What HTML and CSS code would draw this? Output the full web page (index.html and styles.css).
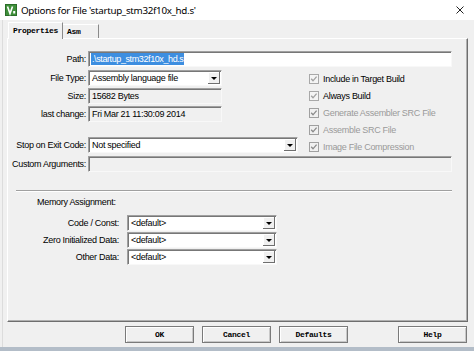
FILE: index.html
```html
<!DOCTYPE html>
<html>
<head>
<meta charset="utf-8">
<title>Options for File</title>
<link rel="stylesheet" href="styles.css">
</head>
<body>
<div class="window">
  <div class="titlebar">
    <svg class="appicon" viewBox="0 0 12 12" width="12" height="12">
      <rect x="0" y="0" width="12" height="12" fill="#3f8f3a"/>
      <rect x="0.5" y="0.5" width="11" height="11" fill="none" stroke="#2b6e29"/>
      <polyline points="2.5,2.5 5,9.5 7.5,2.5" fill="none" stroke="#fff" stroke-width="1.6"/>
      <rect x="8.2" y="7" width="2" height="2.5" fill="#fff"/>
    </svg>
    <span class="title">Options for File 'startup_stm32f10x_hd.s'</span>
    <svg class="close" viewBox="0 0 8 8" width="8" height="8">
      <path d="M0.5 0.5 L7.5 7.5 M7.5 0.5 L0.5 7.5" stroke="#222" stroke-width="1" fill="none"/>
    </svg>
  </div>

  <div class="client">
    <div class="tabs">
      <div class="tab active">Properties</div>
      <div class="tab asm">Asm</div>
    </div>

    <div class="panel">
      <div class="row path-row">
        <span class="lbl">Path:</span>
        <div class="edit w364"><span class="sel">.\startup_stm32f10x_hd.s</span></div>
      </div>

      <div class="upper">
        <div class="leftcol">
          <div class="row">
            <span class="lbl">File Type:</span>
            <div class="combo w134"><span class="val">Assembly language file</span><span class="drop"></span></div>
          </div>
          <div class="row mt2">
            <span class="lbl">Size:</span>
            <div class="ro w134"><span class="val">15682 Bytes</span></div>
          </div>
          <div class="row mt2">
            <span class="lbl">last change:</span>
            <div class="ro w134"><span class="val">Fri Mar 21 11:30:09 2014</span></div>
          </div>
          <div class="row mt15">
            <span class="lbl">Stop on Exit Code:</span>
            <div class="combo w210"><span class="val">Not specified</span><span class="drop"></span></div>
          </div>
        </div>

        <div class="checks">
          <div class="cb"><svg class="box" viewBox="0 0 10 10" width="10" height="10"><rect x="0.5" y="0.5" width="9" height="9" fill="#f4f4f4" stroke="#a8a8a8"/><path d="M2.2 4.8 L4 6.8 L7.6 2.6" stroke="#a0a0a0" stroke-width="1.3" fill="none"/></svg><span>Include in Target Build</span></div>
          <div class="cb"><svg class="box" viewBox="0 0 10 10" width="10" height="10"><rect x="0.5" y="0.5" width="9" height="9" fill="#f4f4f4" stroke="#a8a8a8"/><path d="M2.2 4.8 L4 6.8 L7.6 2.6" stroke="#a0a0a0" stroke-width="1.3" fill="none"/></svg><span>Always Build</span></div>
          <div class="cb dis"><svg class="box" viewBox="0 0 10 10" width="10" height="10"><rect x="0.5" y="0.5" width="9" height="9" fill="#f0f0f0" stroke="#a0a0a0"/><path d="M2.2 4.8 L4 6.8 L7.6 2.6" stroke="#8a8a8a" stroke-width="1.3" fill="none"/></svg><span>Generate Assembler SRC File</span></div>
          <div class="cb dis"><svg class="box" viewBox="0 0 10 10" width="10" height="10"><rect x="0.5" y="0.5" width="9" height="9" fill="#f0f0f0" stroke="#a0a0a0"/><path d="M2.2 4.8 L4 6.8 L7.6 2.6" stroke="#8a8a8a" stroke-width="1.3" fill="none"/></svg><span>Assemble SRC File</span></div>
          <div class="cb dis"><svg class="box" viewBox="0 0 10 10" width="10" height="10"><rect x="0.5" y="0.5" width="9" height="9" fill="#f0f0f0" stroke="#a0a0a0"/><path d="M2.2 4.8 L4 6.8 L7.6 2.6" stroke="#8a8a8a" stroke-width="1.3" fill="none"/></svg><span>Image File Compression</span></div>
        </div>
      </div>

      <div class="row mt1">
        <span class="lbl">Custom Arguments:</span>
        <div class="ro w364"></div>
      </div>

      <div class="sep"></div>

      <div class="memtitle">Memory Assignment:</div>

      <div class="row mem mt7">
        <span class="lbl">Code / Const:</span>
        <div class="combo w150"><span class="val">&lt;default&gt;</span><span class="drop"></span></div>
      </div>
      <div class="row mem mt1">
        <span class="lbl">Zero Initialized Data:</span>
        <div class="combo w150"><span class="val">&lt;default&gt;</span><span class="drop"></span></div>
      </div>
      <div class="row mem mt1">
        <span class="lbl">Other Data:</span>
        <div class="combo w150"><span class="val">&lt;default&gt;</span><span class="drop"></span></div>
      </div>
    </div>

    <div class="buttons">
      <div class="btn">OK</div>
      <div class="btn">Cancel</div>
      <div class="btn">Defaults</div>
      <div class="btn help">Help</div>
    </div>
  </div>
  <div class="strip"></div>
</div>
</body>
</html>
```

FILE: styles.css
```css
* { box-sizing: border-box; }
html, body { margin: 0; padding: 0; }
body {
  width: 474px;
  height: 351px;
  overflow: hidden;
  background: #f0f0f0;
  font-family: "Liberation Sans", Arial, sans-serif;
  font-size: 9px;
  letter-spacing: -0.3px;
  color: #000;
}
.window { display: flex; flex-direction: column; height: 351px; }

.titlebar {
  height: 20px;
  flex: none;
  background: #fff;
  display: flex;
  align-items: center;
  padding-left: 5px;
}
.appicon { flex: none; display: block; }
.title {
  flex: 1;
  margin-left: 4px;
  font-family: "Noto Sans", sans-serif;
  font-size: 9.8px;
  letter-spacing: -0.3px;
  color: #000;
  white-space: nowrap;
}
.close { flex: none; margin-right: 10px; display: block; }

.client {
  flex: 1;
  display: flex;
  flex-direction: column;
  margin-left: 2px;
  border-left: 1px solid #dcdcdc;
}

.tabs {
  height: 18px;
  flex: none;
  display: flex;
  align-items: flex-end;
  padding-left: 5px;
}
.tab {
  font-family: "Liberation Mono", monospace;
  font-weight: bold;
  font-size: 8px;
  letter-spacing: -0.3px;
  height: 14px;
  line-height: 13px;
  padding: 0 4px;
  border: 1px solid;
  border-color: #fff #8a8a8a transparent #fff;
  border-bottom: none;
  white-space: nowrap;
}
.tab.active {
  height: 17px;
  line-height: 15px;
  margin-bottom: -1px;
  background: #f0f0f0;
  position: relative;
  z-index: 1;
  width: 55px;
}
.tab.asm { width: 36px; border-left: none; }

.panel {
  flex: none;
  width: 461px;
  height: 284px;
  margin-left: 4px;
  border-top: 1px solid #fff;
  border-left: 1px solid #fff;
  border-right: 1px solid #6e6e6e;
  border-bottom: 1px solid #6e6e6e;
  box-shadow: inset -1px -1px 0 #b0b0b0;
  display: flex;
  flex-direction: column;
}

.row { display: flex; align-items: center; height: 16px; }
.lbl {
  width: 78px;
  margin-right: 2px;
  text-align: right;
  white-space: nowrap;
}
.path-row { margin-top: 12px; }
.mt1 { margin-top: 1px; }
.mt2 { margin-top: 2px; }
.mt7 { margin-top: 7px; }
.mt15 { margin-top: 15px; }

.w134 { width: 134px; }
.w150 { width: 150px; }
.w210 { width: 210px; }
.w364 { width: 364px; }

.edit, .combo, .ro {
  height: 16px;
  display: flex;
  align-items: center;
  border: 1px solid;
  border-color: #a0a0a0 #f8f8f8 #f8f8f8 #a0a0a0;
  box-shadow: inset 1px 1px 0 #777;
  white-space: nowrap;
  overflow: hidden;
}
.edit, .combo { background: #fff; }
.ro { background: #f0f0f0; }
.val { padding-left: 3px; flex: 1; }
.sel {
  margin-left: 2px;
  background: #3d8ee0;
  color: #fff;
  padding: 0 1px;
  line-height: 12px;
  letter-spacing: -0.4px;
}
.drop {
  flex: none;
  width: 12px;
  height: 12px;
  margin-right: 1px;
  background: #f0f0f0;
  box-shadow: inset -1px -1px 0 #6e6e6e, inset 1px 1px 0 #fff;
  display: flex;
  align-items: center;
  justify-content: center;
}
.drop::after {
  content: "";
  width: 0;
  height: 0;
  border-left: 3px solid transparent;
  border-right: 3px solid transparent;
  border-top: 3px solid #000;
}

.upper { display: flex; margin-top: 3px; }
.leftcol { width: 290px; display: flex; flex-direction: column; }
.checks { margin-left: 11px; display: flex; flex-direction: column; }
.cb { height: 17px; display: flex; align-items: center; white-space: nowrap; }
.cb .box { display: block; margin-right: 4px; flex: none; }
.cb.dis { color: #9a9a9a; }

.sep {
  margin-top: 18px;
  margin-left: 8px;
  width: 436px;
  height: 2px;
  border-top: 1px solid #a0a0a0;
  border-bottom: 1px solid #fff;
}
.memtitle {
  margin-top: 4px;
  padding-left: 29px;
  height: 12px;
  line-height: 12px;
}
.mem .lbl { width: 111px; margin-right: 8px; }

.buttons {
  height: 25px;
  flex: none;
  display: flex;
  align-items: flex-start;
  padding-top: 4px;
  padding-left: 122px;
}
.btn {
  width: 69px;
  height: 17px;
  margin-right: 8px;
  border: 1px solid #7a7a7a;
  box-shadow: inset 1px 1px 0 #fff, inset -1px -1px 0 #c8c8c8;
  background: #f0f0f0;
  font-family: "Liberation Mono", monospace;
  font-weight: bold;
  font-size: 8px;
  letter-spacing: -0.3px;
  display: flex;
  align-items: center;
  justify-content: center;
}
.btn.help { margin-left: 42px; margin-right: 0; }

.strip { height: 4px; flex: none; background: #b3bdc8; }
```
